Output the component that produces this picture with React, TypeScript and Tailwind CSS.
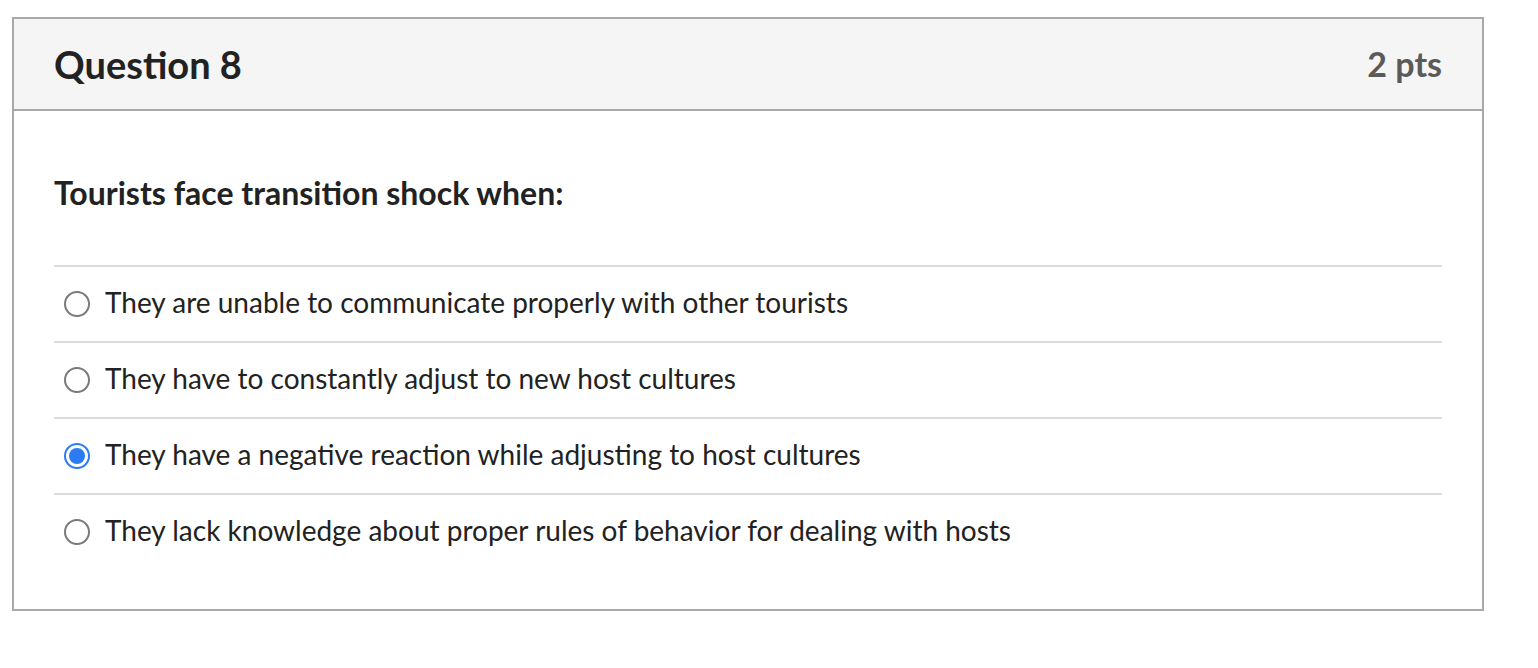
import React from "react";

const options = [
  { text: "They are unable to communicate properly with other tourists", checked: false },
  { text: "They have to constantly adjust to new host cultures", checked: false },
  { text: "They have a negative reaction while adjusting to host cultures", checked: true },
  { text: "They lack knowledge about proper rules of behavior for dealing with hosts", checked: false },
];

function Radio({ checked }: { checked: boolean }) {
  if (checked) {
    return (
      <span className="w-[26px] h-[26px] rounded-full border-2 border-[#2b7bf3] flex items-center justify-center shrink-0 bg-white">
        <span className="w-[16px] h-[16px] rounded-full bg-[#2b7bf3]" />
      </span>
    );
  }
  return <span className="w-[26px] h-[26px] rounded-full border-2 border-[#7a7a7a] shrink-0 bg-white" />;
}

export default function App() {
  return (
    <div className="bg-white w-[1538px] h-[668px] pt-[17px] pl-[12px]" style={{ fontFamily: "Lato, 'Open Sans', sans-serif" }}>
      <div className="w-[1472px] h-[594px] border-2 border-[#a9a9a9] flex flex-col">
        <div className="h-[92px] bg-[#f5f5f5] border-b-2 border-[#a9a9a9] flex items-center justify-between px-[40px]">
          <h2 className="text-[38px] font-bold leading-none text-[#222]">Question 8</h2>
          <span className="text-[34px] font-bold text-[#5a5a5a] leading-none">2 pts</span>
        </div>
        <div className="px-[40px] pt-[62px]">
          <p className="text-[32px] font-bold text-[#222] leading-[40px] mb-[52px]">Tourists face transition shock when:</p>
          <div>
            {options.map((o, i) => (
              <div key={i} className="h-[76px] border-t-2 border-[#dcdcdc] flex items-center gap-[15px] pl-[10px]">
                <Radio checked={o.checked} />
                <span className="text-[28px] text-[#222] leading-none pb-[4px]">{o.text}</span>
              </div>
            ))}
          </div>
        </div>
      </div>
    </div>
  );
}
